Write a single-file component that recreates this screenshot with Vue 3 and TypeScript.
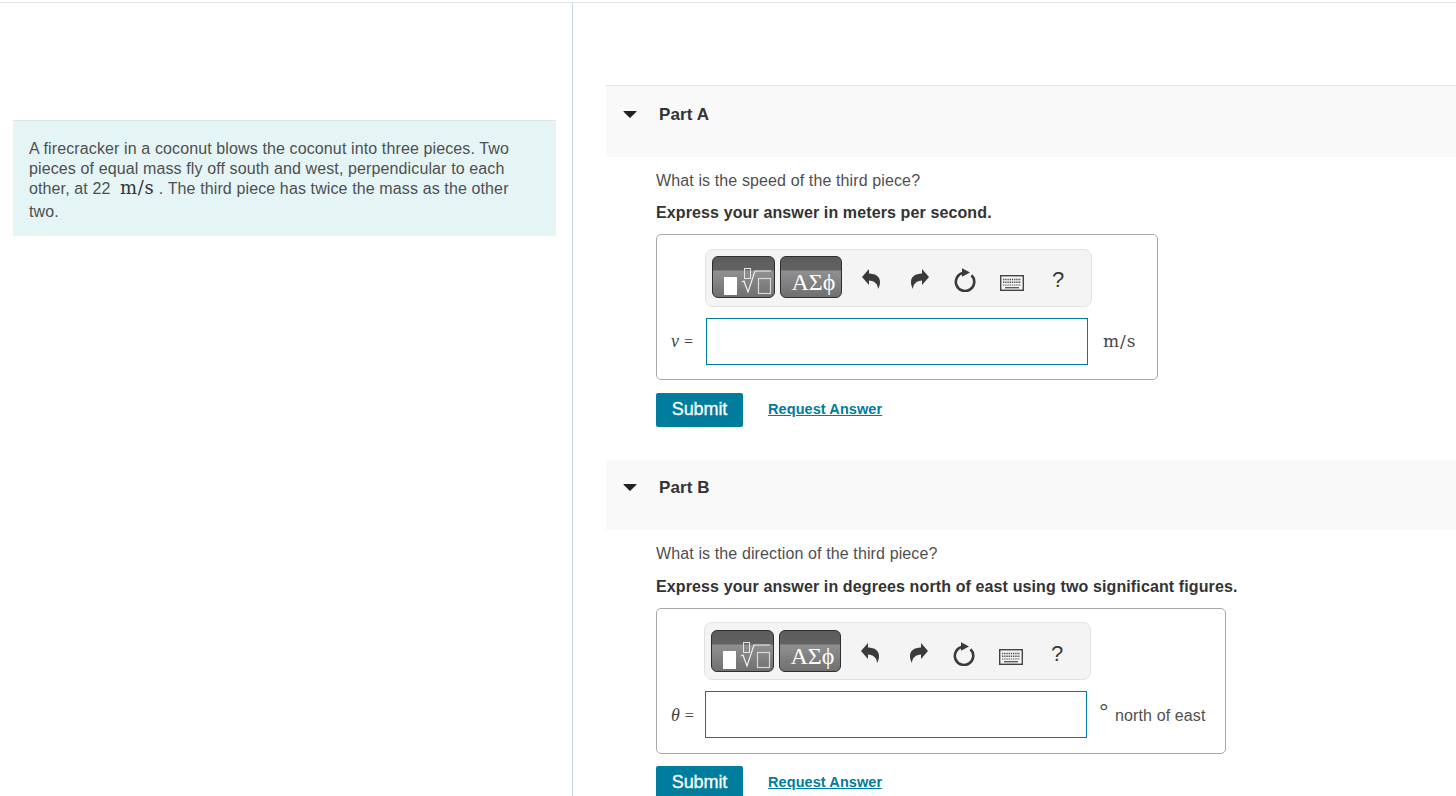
<script setup lang="ts">
interface Part {
  id: string
  question: string
  instruction: string
  symbol: string
  unit: string
  unitSerif: boolean
  wide: boolean
}
const parts: Part[] = [
  {
    id: 'Part A',
    question: 'What is the speed of the third piece?',
    instruction: 'Express your answer in meters per second.',
    symbol: 'v',
    unit: 'm/s',
    unitSerif: true,
    wide: false,
  },
  {
    id: 'Part B',
    question: 'What is the direction of the third piece?',
    instruction: 'Express your answer in degrees north of east using two significant figures.',
    symbol: 'θ',
    unit: 'north of east',
    unitSerif: false,
    wide: true,
  },
]
</script>

<template>
  <div class="page">
    <aside class="left">
      <div class="intro">
        A firecracker in a coconut blows the coconut into three pieces. Two pieces of equal mass fly off south and west,
        perpendicular to each other, at 22 <span class="math-unit">m/s</span> . The third piece has twice the mass as the other two.
      </div>
    </aside>
    <main class="right">
      <section v-for="(p, i) in parts" :key="p.id" class="part" :class="{ first: i === 0 }">
        <header class="part-head">
          <svg class="caret" width="14" height="7" viewBox="0 0 14 7"><path d="M1 0h12q1 0 .4 .7L7.600 6.600q-.6 .6-1.200 0L.6 .7Q0 0 1 0z" fill="#222" /></svg>
          <h2>{{ p.id }}</h2>
        </header>
        <div class="part-body">
          <p class="question">{{ p.question }}</p>
          <p class="instruction">{{ p.instruction }}</p>
          <div class="answer" :class="{ wide: p.wide }">
            <div class="toolbar">
              <button class="tool tpl" type="button" aria-label="Templates">
                <svg width="61" height="40" viewBox="0 0 61 40">
                  <rect x="11" y="20" width="13" height="18" fill="#fff" />
                  <rect x="31.500" y="11.500" width="6" height="10" fill="none" stroke="#e6e6e6" stroke-width="1" />
                  <path d="M29 25l2-1 4 11 7-21h16" fill="none" stroke="#f2f2f2" stroke-width="1.200" />
                  <rect x="45.500" y="21.500" width="12" height="15" fill="none" stroke="#d8d8d8" stroke-width="1.200" />
                </svg>
              </button>
              <button class="tool sym" type="button">ΑΣϕ</button>
              <span class="icons">
                <svg class="ico undo" width="18" height="20" viewBox="0 0 18 20"><path d="M0 8L7 0V4.500C14 4.500 18 8 18 13C18 16 17 18.500 16 20C16 15 12 11.500 7 11.500V16Z" fill="#3a3a3a" /></svg>
                <svg class="ico redo" width="18" height="20" viewBox="0 0 18 20"><path d="M18 8L11 0V4.500C4 4.500 0 8 0 13C0 16 1 18.500 2 20C2 15 6 11.500 11 11.500V16Z" fill="#3a3a3a" /></svg>
                <svg class="ico reload" width="22" height="24" viewBox="0 0 22 24"><path d="M9.500 4.700A9.200 9.200 0 1 0 17.500 7.200" fill="none" stroke="#3a3a3a" stroke-width="2.600" /><path d="M8 .3L16 4.500L8 8.700z" fill="#3a3a3a" /></svg>
                <svg class="ico kbd" width="24" height="16" viewBox="0 0 24 16">
                  <rect x=".7" y=".7" width="22.600" height="14.600" fill="#f4f4f4" stroke="#444" stroke-width="1.400" />
                  <path d="M3 4.500h18M3 7.300h18" stroke="#555" stroke-width="1.500" stroke-dasharray="1.400 .8" fill="none" />
                  <path d="M3 10h18" stroke="#555" stroke-width="1.200" stroke-dasharray="1.400 .8" fill="none" />
                  <path d="M5 12.700h14" stroke="#555" stroke-width="1.300" fill="none" />
                </svg>
                <span class="help">?</span>
              </span>
            </div>
            <div class="entry">
              <span class="label"><i>{{ p.symbol }}</i> =</span>
              <div class="field"></div>
              <span v-if="p.unitSerif" class="unit serif">{{ p.unit }}</span>
              <span v-else class="unit"><span class="deg">°</span>{{ p.unit }}</span>
            </div>
          </div>
          <div class="actions">
            <button class="submit" type="button">Submit</button>
            <a class="req" href="#" @click.prevent>Request Answer</a>
          </div>
        </div>
      </section>
    </main>
  </div>
</template>

<style>
html, body { margin: 0; background: #fff; overflow: hidden; }
</style>

<style scoped>
.page {
  height: 794px;
  margin-top: 2px;
  border-top: 1px solid #e4e4e4;
  display: flex;
  box-sizing: border-box;
  overflow: hidden;
  font-family: "Liberation Sans", Arial, sans-serif;
  font-size: 16px;
  letter-spacing: .12px;
  color: #4f4f4f;
}
.left {
  width: 573px;
  flex: none;
  box-sizing: border-box;
  border-right: 1px solid #c6d6e2;
  padding: 117px 16px 0 13px;
}
.intro {
  background: #e5f5f6;
  border-top: 1px solid #d9e4e4;
  padding: 18px 30px 16px 16px;
  height: 116px;
  box-sizing: border-box;
  line-height: 20px;
}
.math-unit {
  display: inline-block;
  font-family: "DejaVu Serif", "Liberation Serif", serif;
  font-size: 18px;
  line-height: 18px;
  letter-spacing: .6px;
  margin: 0 0 5px 5px;
  color: #333;
}
.right {
  flex: 1;
  min-width: 0;
  padding-left: 33px;
}
.part-head {
  height: 70px;
  background: #f9f9f9;
  display: flex;
  align-items: flex-start;
  box-sizing: border-box;
  padding: 18px 0 0 17px;
}
.part.first { margin-top: 82px; }
.part.first .part-head {
  height: 72px;
  border-top: 1px solid #e4e4e4;
  padding-top: 19px;
}
.part + .part { margin-top: 33px; }
.caret { margin-top: 6px; flex: none; }
h2 {
  margin: 0 0 0 22px;
  font-size: 17px;
  line-height: 20px;
  font-weight: 700;
  letter-spacing: .1px;
  color: #333;
}
.part-body { padding: 14px 0 0 50px; }
.question { margin: 0; line-height: 20px; height: 20px; }
.instruction { margin: 12px 0 0; font-weight: 700; color: #333; line-height: 20px; }
.part:not(.first) .instruction { margin-top: 13px; }
.answer {
  margin-top: 11px;
  width: 502px;
  height: 146px;
  box-sizing: border-box;
  border: 1px solid #a9a9a9;
  border-radius: 5px;
  padding: 14px 0 0 48px;
}
.answer.wide { width: 570px; padding: 13px 0 0 47px; }
.toolbar {
  width: 387px;
  height: 58px;
  box-sizing: border-box;
  background: #f4f4f4;
  border: 1px solid #e2e2e2;
  border-radius: 8px;
  display: flex;
  align-items: flex-start;
  padding: 6px 0 0 6px;
  gap: 5px;
}
.wide .toolbar { padding-top: 7px; }
.tool {
  height: 42px;
  padding: 0;
  box-sizing: border-box;
  border: 1px solid #2e2e2e;
  border-radius: 6px;
  background: linear-gradient(#5c5c5c 0, #626262 13px, #909090 14px, #707070 100%);
  color: #fff;
  display: block;
  flex: none;
}
.tpl { width: 63px; }
.tpl svg { display: block; }
.sym {
  width: 62px;
  font-family: "Liberation Serif", "DejaVu Serif", serif;
  font-size: 24px;
  padding: 10px 0 0 5px;
  line-height: 28px;
  letter-spacing: 0;
}
.icons {
  display: flex;
  align-items: flex-start;
  margin-left: -5px;
  height: 42px;
  flex: 1;
}
.ico { display: block; flex: none; }
.undo { margin: 13px 0 0 20px; }
.redo { margin: 13px 0 0 31px; }
.reload { margin: 12px 0 0 25px; }
.kbd { margin: 19px 0 0 24px; }
.help {
  margin: 13px 0 0 28px;
  font-size: 22px;
  color: #3a3a3a;
  line-height: 22px;
  letter-spacing: 0;
}
.entry {
  display: flex;
  align-items: center;
  margin-top: 11px;
  margin-left: -48px;
  height: 47px;
}
.wide .entry { margin-left: -47px; }
.label {
  width: 49px;
  box-sizing: border-box;
  padding-left: 14px;
  font-family: "Liberation Serif", "DejaVu Serif", serif;
  font-size: 16px;
  color: #444;
  white-space: nowrap;
  letter-spacing: 0;
}
.label i { font-style: italic; font-size: 18px; margin-right: 1px; }
.wide .label { width: 48px; padding-top: 1px; }
.field {
  width: 382px;
  height: 47px;
  box-sizing: border-box;
  border: 1px solid #007c9d;
  background: #fff;
  flex: none;
}
.unit { white-space: nowrap; position: relative; padding: 2px 0 0 15px; margin-left: 13px; }
.unit.serif {
  font-family: "DejaVu Serif", "Liberation Serif", serif;
  font-size: 17px;
  letter-spacing: .9px;
  padding: 0 0 2px;
  color: #444;
  margin-left: 15px;
}
.deg {
  position: absolute;
  left: -1px;
  top: -3px;
  font-size: 24px;
  line-height: 20px;
}
.actions {
  margin-top: 13px;
  display: flex;
  align-items: center;
  height: 34px;
}
.wide + .actions { margin-top: 12px; }
.submit {
  width: 87px;
  height: 34px;
  border: 0;
  border-radius: 2px;
  background: #007c9d;
  color: #fff;
  font-family: inherit;
  font-size: 18px;
  letter-spacing: -.1px;
  -webkit-text-stroke: .3px #fff;
  padding: 0 0 2px;
}
.req {
  margin-left: 25px;
  margin-bottom: 2px;
  color: #007c9d;
  font-weight: 700;
  font-size: 14.500px;
  letter-spacing: .08px;
  text-decoration: underline;
}
</style>
